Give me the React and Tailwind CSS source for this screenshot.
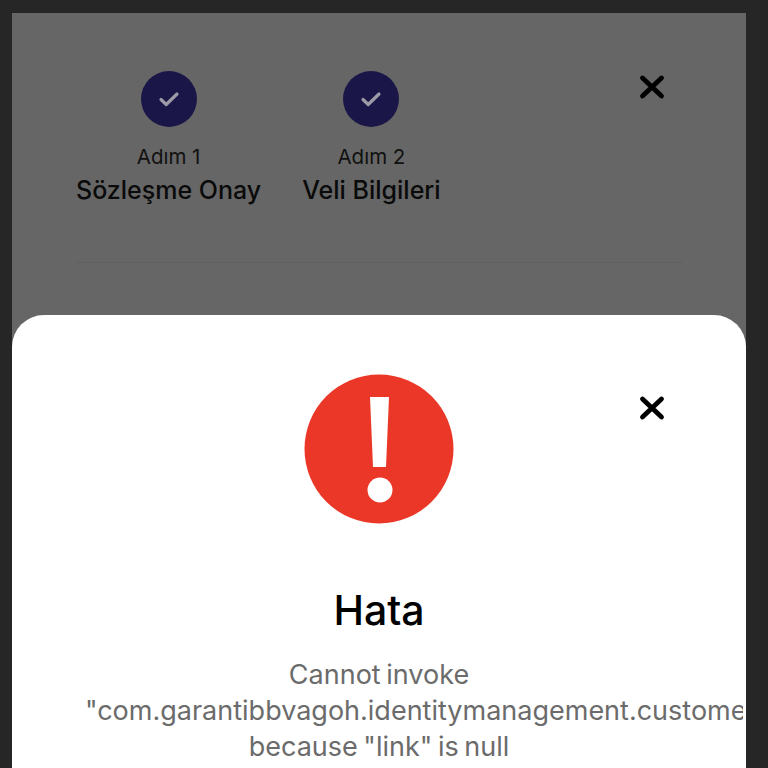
const CloseIcon = () => (
  <svg width="28" height="28" viewBox="0 0 28 28" fill="none" stroke="#000" strokeWidth="4.8" strokeLinecap="round">
    <path d="M4.5 5l19 18M23.5 5L4.5 23" />
  </svg>
);

const Step = ({ label, title }) => (
  <div className="flex flex-col items-center">
    <div className="flex h-14 w-14 items-center justify-center rounded-full bg-[#1b1648]">
      <svg width="24" height="24" viewBox="0 0 24 24" fill="none" stroke="#9d9aa8" strokeWidth="3.2" strokeLinecap="round" strokeLinejoin="round">
        <path d="M4 12.5l5.2 5L20 7" />
      </svg>
    </div>
    <p className="mt-[17px] text-[20.5px] leading-[26px] text-[#111111]">{label}</p>
    <p className="mt-[3px] text-[25px] leading-[34px] font-medium text-[#0a0a0a]">{title}</p>
  </div>
);

export default function App() {
  return (
    <div className="h-[768px] w-[768px] overflow-hidden bg-[#262626] pt-[13px] pr-[22px] pl-3 font-['Inter',sans-serif]">
      <div className="h-full overflow-hidden bg-[#666666]">
        {/* Adımlar */}
        <div className="relative h-[302px] px-[64px] pt-[58px]">
          <div className="flex gap-[41px]">
            <Step label="Adım 1" title="Sözleşme Onay" />
            <Step label="Adım 2" title="Veli Bilgileri" />
          </div>
          <div className="absolute top-[60px] right-[80px]">
            <CloseIcon />
          </div>
          <div className="mt-[55px] h-px w-[607px] bg-[#606060]" />
        </div>

        {/* Hata penceresi */}
        <div className="relative h-[453px] rounded-t-[32px] bg-white pt-[59px]">
          <div className="absolute top-[79px] right-[80px]">
            <CloseIcon />
          </div>
          <svg className="mx-auto block" width="150" height="150" viewBox="0 0 150 150">
            <circle cx="75" cy="75" r="74.5" fill="#ea3727" />
            <path d="M66 23h19l-3 70h-13z" fill="#fff" />
            <circle cx="76" cy="116" r="12.5" fill="#fff" />
          </svg>
          <h2 className="mt-[62px] text-center text-[41px] leading-[48px] font-medium text-black">Hata</h2>
          <div className="mt-[23px] mr-[3px] overflow-hidden">
            <p className="ml-[73px] w-[588px] text-center text-[27px] leading-[36px] [word-spacing:-2px] text-[#6b6b6b]">
              Cannot invoke "com.garantibbvagoh.identitymanagement.customer.dto because "link" is null
            </p>
          </div>
        </div>
      </div>
    </div>
  );
}
